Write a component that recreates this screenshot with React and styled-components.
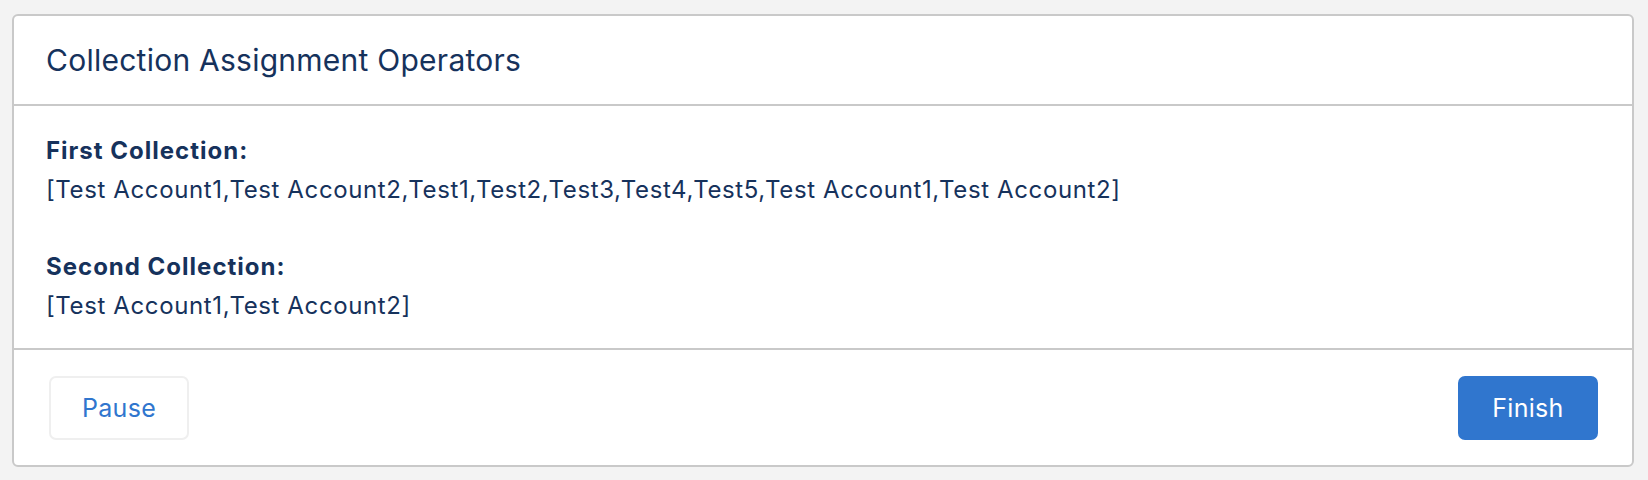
import styled, { createGlobalStyle } from "styled-components";

const GlobalStyle = createGlobalStyle`
  body {
    margin: 0;
    background: #f3f3f3;
    font-family: Inter, "Noto Sans", sans-serif;
    color: #16325c;
  }
`;

const Page = styled.div`
  padding: 14px 14px 13px 12px;
`;

const Card = styled.div`
  background: #ffffff;
  border: 2px solid #c9c9c9;
  border-radius: 6px;
`;

const Header = styled.div`
  height: 88px;
  display: flex;
  align-items: center;
  padding: 0 32px;
  border-bottom: 2px solid #c9c9c9;
`;

const Title = styled.h2`
  margin: 0;
  font-size: 30px;
  font-weight: 400;
  letter-spacing: 0.25px;
  color: #16325c;
`;

const Body = styled.div`
  padding: 28px 32px 26px;
`;

const Section = styled.div`
  & + & {
    margin-top: 44px;
  }
`;

const Label = styled.div`
  font-size: 24px;
  font-weight: 700;
  line-height: 33px;
  letter-spacing: 1px;
  margin-bottom: 6px;
`;

const Value = styled.div`
  font-size: 24px;
  line-height: 33px;
  letter-spacing: 0.62px;
`;

const Footer = styled.div`
  display: flex;
  justify-content: space-between;
  align-items: center;
  padding: 26px 34px 25px 35px;
  border-top: 2px solid #c9c9c9;
`;

const Button = styled.button`
  width: 140px;
  height: 64px;
  border-radius: 7px;
  font-family: Inter, "Noto Sans", sans-serif;
  font-size: 25px;
  letter-spacing: 0.3px;
  cursor: pointer;
  border: 2px solid ${(p) => (p.$primary ? "#3076ce" : "#efefef")};
  background: ${(p) => (p.$primary ? "#3076ce" : "#ffffff")};
  color: ${(p) => (p.$primary ? "#ffffff" : "#3076ce")};
`;

const collections = [
  {
    label: "First Collection:",
    value:
      "[Test Account1,Test Account2,Test1,Test2,Test3,Test4,Test5,Test Account1,Test Account2]",
  },
  { label: "Second Collection:", value: "[Test Account1,Test Account2]" },
];

export default function App() {
  return (
    <>
      <GlobalStyle />
      <Page>
        <Card>
          <Header>
            <Title>Collection Assignment Operators</Title>
          </Header>
          <Body>
            {collections.map((c) => (
              <Section key={c.label}>
                <Label>{c.label}</Label>
                <Value>{c.value}</Value>
              </Section>
            ))}
          </Body>
          <Footer>
            <Button>Pause</Button>
            <Button $primary>Finish</Button>
          </Footer>
        </Card>
      </Page>
    </>
  );
}
